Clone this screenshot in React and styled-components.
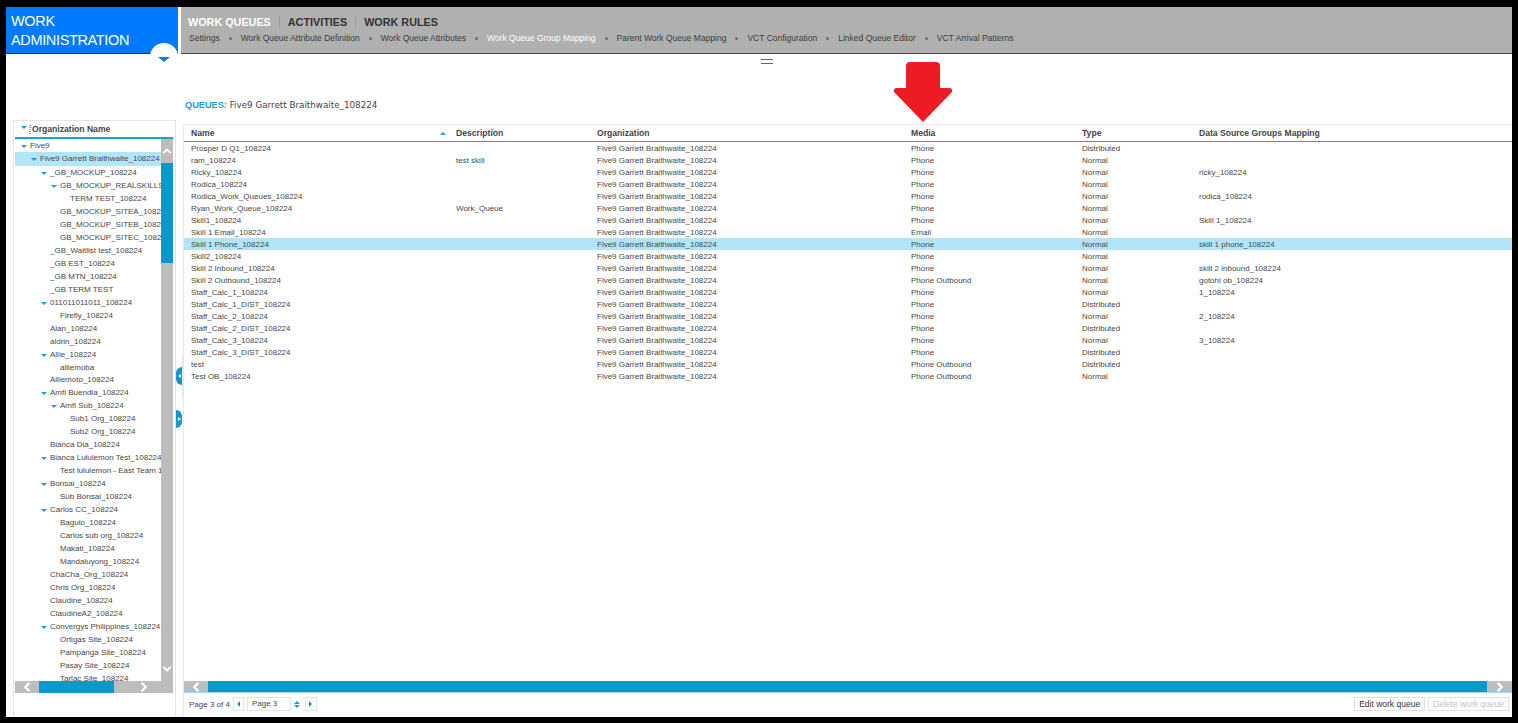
import React from "react";
import styled, { createGlobalStyle } from "styled-components";
import { ChevronLeft, ChevronRight, ChevronUp, ChevronDown } from "lucide-react";

const ORG = "Five9 Garrett Braithwaite_108224";

const treeItems = [
  { level: 0, label: "Five9", open: true },
  { level: 1, label: ORG, open: true, selected: true },
  { level: 2, label: "_GB_MOCKUP_108224", open: true },
  { level: 3, label: "GB_MOCKUP_REALSKILLS_108224", open: true },
  { level: 4, label: "TERM TEST_108224" },
  { level: 3, label: "GB_MOCKUP_SITEA_108224" },
  { level: 3, label: "GB_MOCKUP_SITEB_108224" },
  { level: 3, label: "GB_MOCKUP_SITEC_108224" },
  { level: 2, label: "_GB_Waitlist test_108224" },
  { level: 2, label: "_GB EST_108224" },
  { level: 2, label: "_GB MTN_108224" },
  { level: 2, label: "_GB TERM TEST" },
  { level: 2, label: "011011011011_108224", open: true },
  { level: 3, label: "Firefly_108224" },
  { level: 2, label: "Alan_108224" },
  { level: 2, label: "aldrin_108224" },
  { level: 2, label: "Allie_108224", open: true },
  { level: 3, label: "alliemoba" },
  { level: 2, label: "Alliemoto_108224" },
  { level: 2, label: "Amfi Buendia_108224", open: true },
  { level: 3, label: "Amfi Sub_108224", open: true },
  { level: 4, label: "Sub1 Org_108224" },
  { level: 4, label: "Sub2 Org_108224" },
  { level: 2, label: "Bianca Dia_108224" },
  { level: 2, label: "Bianca Lululemon Test_108224", open: true },
  { level: 3, label: "Test lululemon - East Team 1_108224" },
  { level: 2, label: "Bonsai_108224", open: true },
  { level: 3, label: "Sub Bonsai_108224" },
  { level: 2, label: "Carlos CC_108224", open: true },
  { level: 3, label: "Baguio_108224" },
  { level: 3, label: "Carlos sub org_108224" },
  { level: 3, label: "Makati_108224" },
  { level: 3, label: "Mandaluyong_108224" },
  { level: 2, label: "ChaCha_Org_108224" },
  { level: 2, label: "Chris Org_108224" },
  { level: 2, label: "Claudine_108224" },
  { level: 2, label: "ClaudineA2_108224" },
  { level: 2, label: "Convergys Philippines_108224", open: true },
  { level: 3, label: "Ortigas Site_108224" },
  { level: 3, label: "Pampanga Site_108224" },
  { level: 3, label: "Pasay Site_108224" },
  { level: 3, label: "Tarlac Site_108224" },
];

const queues = [
  ["Prosper D Q1_108224", "", "Phone", "Distributed", ""],
  ["ram_108224", "test skill", "Phone", "Normal", ""],
  ["Ricky_108224", "", "Phone", "Normal", "ricky_108224"],
  ["Rodica_108224", "", "Phone", "Normal", ""],
  ["Rodica_Work_Queues_108224", "", "Phone", "Normal", "rodica_108224"],
  ["Ryan_Work_Queue_108224", "Work_Queue", "Phone", "Normal", ""],
  ["Skill1_108224", "", "Phone", "Normal", "Skill 1_108224"],
  ["Skill 1 Email_108224", "", "Email", "Normal", ""],
  ["Skill 1 Phone_108224", "", "Phone", "Normal", "skill 1 phone_108224"],
  ["Skill2_108224", "", "Phone", "Normal", ""],
  ["Skill 2 Inbound_108224", "", "Phone", "Normal", "skill 2 inbound_108224"],
  ["Skill 2 Outbound_108224", "", "Phone Outbound", "Normal", "gotohi ob_108224"],
  ["Staff_Calc_1_108224", "", "Phone", "Normal", "1_108224"],
  ["Staff_Calc_1_DIST_108224", "", "Phone", "Distributed", ""],
  ["Staff_Calc_2_108224", "", "Phone", "Normal", "2_108224"],
  ["Staff_Calc_2_DIST_108224", "", "Phone", "Distributed", ""],
  ["Staff_Calc_3_108224", "", "Phone", "Normal", "3_108224"],
  ["Staff_Calc_3_DIST_108224", "", "Phone", "Distributed", ""],
  ["test", "", "Phone Outbound", "Distributed", ""],
  ["Test OB_108224", "", "Phone Outbound", "Normal", ""],
];

const navLinks = [
  "Settings",
  "Work Queue Attribute Definition",
  "Work Queue Attributes",
  "Work Queue Group Mapping",
  "Parent Work Queue Mapping",
  "VCT Configuration",
  "Linked Queue Editor",
  "VCT Arrival Patterns",
];

const App = () => {
  return (
    <>
      <GlobalStyle />
      <Frame>
        <Header>
          <Brand>
            WORK
            <br />
            ADMINISTRATION
            <BrandTab>
              <BrandArrow />
            </BrandTab>
          </Brand>
          <TopNav>
            <Tabs>
              <Tab active>WORK QUEUES</Tab>
              <TabDivider />
              <Tab>ACTIVITIES</Tab>
              <TabDivider />
              <Tab>WORK RULES</Tab>
            </Tabs>
            <SubNav>
              {navLinks.map((link, i) => (
                <React.Fragment key={link}>
                  {i > 0 && <NavDot />}
                  <NavLink active={link === "Work Queue Group Mapping"}>{link}</NavLink>
                </React.Fragment>
              ))}
            </SubNav>
          </TopNav>
        </Header>

        <Splitter />
        <RedArrow viewBox="0 0 60 60">
          <path
            d="M17 0 H43 Q47 0 47 4 V26 H56 Q60 26 59 30 L30 60 L1 30 Q0 26 4 26 H13 V4 Q13 0 17 0 Z"
            fill="#ed1c24"
          />
        </RedArrow>

        <Body>
          <Sidebar>
            <TreePanel>
              <TreeHeader>
                <HeadArrow />
                <DottedBar />
                Organization Name
              </TreeHeader>
              <TreeView>
                <TreeList>
                  {treeItems.map((item) => (
                    <TreeRow key={item.label} level={item.level} selected={item.selected}>
                      {item.open && <TreeArrow />}
                      {item.label}
                    </TreeRow>
                  ))}
                </TreeList>
                <VScroll>
                  <VButton>
                    <ChevronUp size={14} strokeWidth={4} color="#fff" />
                  </VButton>
                  <VThumb />
                  <VTrack />
                  <VButton>
                    <ChevronDown size={14} strokeWidth={4} color="#fff" />
                  </VButton>
                </VScroll>
              </TreeView>
              <HScroll height={12}>
                <HButton width={24}>
                  <ChevronLeft size={14} strokeWidth={4} color="#fff" />
                </HButton>
                <TreeThumb />
                <HTrack>
                  <ChevronRight size={14} strokeWidth={4} color="#fff" />
                </HTrack>
              </HScroll>
            </TreePanel>
            <CollapseButton direction="left" />
            <CollapseButton direction="right" />
          </Sidebar>

          <Main>
            <Title>
              <TitleLabel>QUEUES:</TitleLabel> {ORG}
            </Title>
            <GridPanel>
              <TableHead>
                <HeadCell>
                  Name
                  <SortArrow />
                </HeadCell>
                <HeadCell>Description</HeadCell>
                <HeadCell>Organization</HeadCell>
                <HeadCell>Media</HeadCell>
                <HeadCell>Type</HeadCell>
                <HeadCell>Data Source Groups Mapping</HeadCell>
              </TableHead>
              <TableBody>
                {queues.map((q) => (
                  <TableRow key={q[0]} selected={q[0] === "Skill 1 Phone_108224"}>
                    <span>{q[0]}</span>
                    <span>{q[1]}</span>
                    <span>{ORG}</span>
                    <span>{q[2]}</span>
                    <span>{q[3]}</span>
                    <span>{q[4]}</span>
                  </TableRow>
                ))}
              </TableBody>
              <HScroll height={11}>
                <HButton width={24}>
                  <ChevronLeft size={14} strokeWidth={4} color="#fff" />
                </HButton>
                <GridThumb />
                <HButton width={25}>
                  <ChevronRight size={14} strokeWidth={4} color="#fff" />
                </HButton>
              </HScroll>
              <Footer>
                <PageText>Page 3 of 4</PageText>
                <PageButton width={9}>
                  <PagerArrow direction="left" />
                </PageButton>
                <PageSelect>Page 3</PageSelect>
                <Spinner>
                  <SpinUp />
                  <SpinDown />
                </Spinner>
                <PageButton width={10}>
                  <PagerArrow direction="right" />
                </PageButton>
                <Actions>
                  <ActionButton>Edit work queue</ActionButton>
                  <ActionButton disabled>Delete work queue</ActionButton>
                </Actions>
              </Footer>
            </GridPanel>
          </Main>
        </Body>
      </Frame>
    </>
  );
};

const GlobalStyle = createGlobalStyle`
  html, body {
    margin: 0;
    height: 100%;
    background: #000;
    overflow: hidden;
  }
  body {
    font-family: "Liberation Sans", Arial, sans-serif;
    font-size: 8px;
    color: #484848;
  }
`;

const Frame = styled.div`
  position: relative;
  width: 1506px;
  height: 710px;
  margin: 7px 0 0 6px;
  background: #fff;
  display: flex;
  flex-direction: column;
  overflow: hidden;
`;

const Header = styled.header`
  height: 47px;
  flex: none;
  display: flex;
`;

const Brand = styled.div`
  position: relative;
  width: 172px;
  box-sizing: border-box;
  padding: 5px 0 0 5px;
  background: #007bff;
  border-bottom: 1px solid #333;
  color: #fff;
  font-size: 14.5px;
  line-height: 18.5px;
  letter-spacing: -0.35px;
`;

const BrandTab = styled.div`
  position: absolute;
  left: 144px;
  top: 36px;
  width: 28px;
  height: 28px;
  border-radius: 50%;
  background: #fff;
  z-index: 2;
`;

const BrandArrow = styled.div`
  position: absolute;
  left: 8px;
  top: 14px;
  border-style: solid;
  border-width: 5px 6px 0 6px;
  border-color: #0a7fe0 transparent transparent transparent;
`;

const TopNav = styled.nav`
  flex: 1;
  margin-left: 3px;
  padding: 7px 0 0 7px;
  background: #b0b0b0;
  border-bottom: 1px solid #444;
`;

const Tabs = styled.div`
  display: flex;
  align-items: center;
  height: 15px;
`;

const Tab = styled.span`
  font-size: 10.8px;
  font-weight: bold;
  color: ${(p) => (p.active ? "#fff" : "#333")};
`;

const TabDivider = styled.span`
  width: 1px;
  height: 11px;
  margin: 0 8px;
  background: #9c9c9c;
`;

const SubNav = styled.div`
  display: flex;
  align-items: center;
  margin: 3px 0 0 1px;
  height: 12px;
`;

const NavLink = styled.span`
  font-size: 8.5px;
  color: ${(p) => (p.active ? "#fff" : "#3c3c3c")};
`;

const NavDot = styled.span`
  width: 3px;
  height: 3px;
  margin: 0 9px;
  background: #6e6e6e;
  border-radius: 50%;
`;

const Splitter = styled.div`
  position: absolute;
  left: 755px;
  top: 52px;
  width: 12px;
  height: 3px;
  border-top: 1px solid #666;
  border-bottom: 1px solid #666;
`;

const RedArrow = styled.svg`
  position: absolute;
  left: 887px;
  top: 55px;
  width: 60px;
  height: 60px;
  z-index: 3;
`;

const Body = styled.div`
  flex: 1;
  min-height: 0;
  display: flex;
`;

const Sidebar = styled.aside`
  position: relative;
  width: 177px;
  flex: none;
  box-sizing: border-box;
  padding: 66px 0 0 7px;
`;

const TreePanel = styled.div`
  width: 163px;
  height: 100%;
  box-sizing: border-box;
  border: 1px solid #e4e4e4;
  border-bottom: 0;
  padding: 0 2px 0 1px;
`;

const TreeHeader = styled.div`
  height: 16px;
  display: flex;
  align-items: center;
  border-bottom: 2px solid #1ba1d4;
  font-size: 8.6px;
  font-weight: bold;
  color: #444;
`;

const HeadArrow = styled.span`
  margin: -4px 2px 0 6px;
  border-style: solid;
  border-width: 3px 3.5px 0 3.5px;
  border-color: #1a9ed4 transparent transparent transparent;
`;

const DottedBar = styled.span`
  width: 2px;
  height: 9px;
  margin-right: 1px;
  background: repeating-linear-gradient(#5bb8dc 0 1px, #fff 1px 2px);
`;

const TreeView = styled.div`
  display: flex;
  height: 542px;
`;

const TreeList = styled.div`
  flex: 1;
  min-width: 0;
  overflow: hidden;
`;

const TreeRow = styled.div`
  position: relative;
  height: ${(p) => (p.selected ? "14px" : "12.97px")};
  line-height: ${(p) => (p.selected ? "14px" : "13px")};
  padding-left: ${(p) => 15 + p.level * 10}px;
  white-space: nowrap;
  overflow: hidden;
  background: ${(p) => (p.selected ? "#b3e5fa" : "transparent")};
`;

const TreeArrow = styled.span`
  position: absolute;
  margin-left: -9px;
  top: 6px;
  border-style: solid;
  border-width: 3px 3px 0 3px;
  border-color: #1a9ed4 transparent transparent transparent;
`;

const VScroll = styled.div`
  width: 12px;
  flex: none;
  display: flex;
  flex-direction: column;
  background: #bdbdbd;
`;

const VButton = styled.div`
  height: 24px;
  flex: none;
  display: flex;
  align-items: center;
  justify-content: center;
`;

const VThumb = styled.div`
  height: 100px;
  flex: none;
  background: #0c98c9;
`;

const VTrack = styled.div`
  flex: 1;
`;

const HScroll = styled.div`
  height: ${(p) => p.height}px;
  flex: none;
  display: flex;
  background: #bdbdbd;
  border-bottom: ${(p) => (p.height === 11 ? "1px solid #a8d8ec" : "0")};
`;

const HButton = styled.div`
  width: ${(p) => p.width}px;
  flex: none;
  display: flex;
  align-items: center;
  justify-content: center;
`;

const TreeThumb = styled.div`
  width: 75px;
  flex: none;
  background: #0c98c9;
`;

const HTrack = styled.div`
  flex: 1;
  display: flex;
  align-items: center;
  justify-content: center;
`;

const GridThumb = styled.div`
  flex: 1;
  background: #0c98c9;
`;

const CollapseButton = styled.div`
  position: absolute;
  left: 170px;
  top: ${(p) => (p.direction === "left" ? 313 : 356)}px;
  width: 6px;
  height: 18px;
  border-radius: ${(p) => (p.direction === "left" ? "10px 0 0 10px" : "0 10px 10px 0")};
  background: #1298c8;
  &::before {
    content: "";
    position: absolute;
    top: -12px;
    left: ${(p) => (p.direction === "left" ? "6px" : "-1px")};
    width: 1px;
    height: 42px;
    background: #dcecf4;
  }
  &::after {
    content: "";
    position: absolute;
    top: 6.5px;
    left: 2px;
    border-style: solid;
    border-width: 2.5px ${(p) => (p.direction === "left" ? "3px" : "0")} 2.5px
      ${(p) => (p.direction === "left" ? "0" : "3px")};
    border-color: transparent
      ${(p) => (p.direction === "left" ? "#fff" : "transparent")} transparent
      ${(p) => (p.direction === "left" ? "transparent" : "#fff")};
  }
`;

const Main = styled.main`
  flex: 1;
  min-width: 0;
  display: flex;
  flex-direction: column;
`;

const Title = styled.h2`
  height: 12px;
  flex: none;
  margin: 45px 0 13px 2px;
  font-family: "DejaVu Sans", sans-serif;
  font-size: 8.75px;
  font-weight: normal;
  line-height: 12px;
  color: #444;
`;

const TitleLabel = styled.span`
  font-family: "Liberation Sans", Arial, sans-serif;
  font-size: 9.2px;
  font-weight: bold;
  color: #1a9ed4;
`;

const GridPanel = styled.section`
  flex: 1;
  min-height: 0;
  display: flex;
  flex-direction: column;
  border: 1px solid #e8e8e8;
  border-width: 1px 0 0 1px;
`;

const columns = "265px 141px 314px 171px 117px 1fr";

const TableHead = styled.div`
  height: 17px;
  flex: none;
  box-sizing: border-box;
  padding: 0 0 1px 7px;
  display: grid;
  grid-template-columns: ${columns};
  align-items: center;
  border-bottom: 1px solid #1ba1d4;
`;

const HeadCell = styled.div`
  position: relative;
  font-size: 8.6px;
  font-weight: bold;
  color: #444;
`;

const SortArrow = styled.span`
  position: absolute;
  left: 249px;
  top: 4px;
  border-style: solid;
  border-width: 0 3px 3px 3px;
  border-color: transparent transparent #1a9ed4 transparent;
`;

const TableBody = styled.div`
  flex: 1;
  min-height: 0;
`;

const TableRow = styled.div`
  height: 12px;
  display: grid;
  grid-template-columns: ${columns};
  padding-left: 7px;
  line-height: 13px;
  white-space: nowrap;
  background: ${(p) => (p.selected ? "#b3e5fa" : "transparent")};
`;

const Footer = styled.footer`
  height: 24px;
  flex: none;
  box-sizing: border-box;
  padding: 0 3px 2px 5px;
  display: flex;
  align-items: center;
`;

const PageText = styled.span`
  margin-right: 3px;
`;

const PageButton = styled.div`
  width: ${(p) => p.width}px;
  height: 12px;
  border: 1px solid #e4e4e4;
  display: flex;
  align-items: center;
  justify-content: center;
`;

const PagerArrow = styled.span`
  border-style: solid;
  border-width: 3px ${(p) => (p.direction === "left" ? "3px" : "0")} 3px
    ${(p) => (p.direction === "left" ? "0" : "3px")};
  border-color: transparent
    ${(p) => (p.direction === "left" ? "#1a8fc4" : "transparent")} transparent
    ${(p) => (p.direction === "left" ? "transparent" : "#1a8fc4")};
`;

const PageSelect = styled.div`
  width: 38px;
  height: 12px;
  margin-left: 3px;
  padding-left: 4px;
  line-height: 12px;
  border: 1px solid #e4e4e4;
`;

const Spinner = styled.div`
  display: flex;
  flex-direction: column;
  gap: 1px;
  margin: 0 5px 0 3px;
  width: 6px;
`;

const SpinUp = styled.span`
  border-style: solid;
  border-width: 0 3px 3px 3px;
  border-color: transparent transparent #1a9ed4 transparent;
`;

const SpinDown = styled.span`
  border-style: solid;
  border-width: 3px 3px 0 3px;
  border-color: #1a9ed4 transparent transparent transparent;
`;

const Actions = styled.div`
  margin-left: auto;
  display: flex;
  gap: 3px;
`;

const ActionButton = styled.div`
  height: 12px;
  padding: 0 4px;
  font-size: 8.5px;
  line-height: 12px;
  border: 1px solid #e0e0e0;
  color: ${(p) => (p.disabled ? "#c4c4c4" : "#333")};
`;

export default App;
